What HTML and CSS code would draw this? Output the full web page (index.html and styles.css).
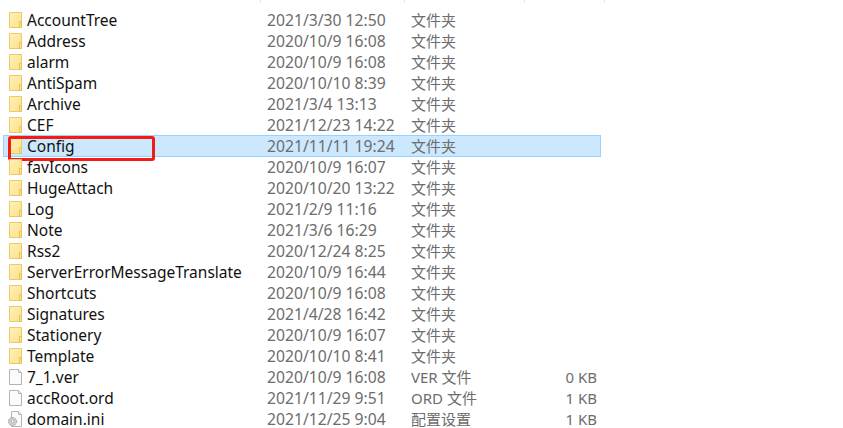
FILE: index.html
```html
<!DOCTYPE html>
<html lang="zh">
<head>
<meta charset="utf-8">
<title>Files</title>
<link rel="stylesheet" href="styles.css">
</head>
<body>
<svg class="defs" width="0" height="0" aria-hidden="true">
  <defs>
    <linearGradient id="fg" x1="0" y1="0" x2="1" y2="1">
      <stop offset="0" stop-color="#fff1b8"/>
      <stop offset="1" stop-color="#fde08a"/>
    </linearGradient>
  </defs>
  <symbol id="folder" viewBox="0 0 16 16">
    <path d="M1.5 .5H13.5V15.5H1.5Z" fill="url(#fg)" stroke="#eccb66"/>
    <path d="M11.5 9.5H13.5V15.5H11.5Z" fill="#fbe39a" stroke="#e8c259"/>
  </symbol>
  <symbol id="file" viewBox="0 0 16 16">
    <path d="M1.5 .5H10.5L13.5 3.5V15.5H1.5Z" fill="#fbfbfb" stroke="#b4b4b4"/>
    <path d="M10.5 .5V3.5H13.5" fill="#ececec" stroke="#b4b4b4"/>
  </symbol>
  <symbol id="ini" viewBox="0 0 16 16">
    <path d="M3.5 .5H10.5L13.5 3.5V15.5H3.5Z" fill="#fbfbfb" stroke="#b4b4b4"/>
    <path d="M10.5 .5V3.5H13.5" fill="#ececec" stroke="#b4b4b4"/>
    <circle cx="4.5" cy="10.5" r="4" fill="#d2d2d2" stroke="#949494" stroke-dasharray="1.6 1"/>
    <circle cx="4.5" cy="10.5" r="1.5" fill="#f4f4f4" stroke="#949494" stroke-width=".6"/>
  </symbol>
</svg>
<div class="headers"><i></i><i></i><i></i><i></i></div>
<div class="list">
  <div class="row"><svg class="icon"><use href="#folder"/></svg><span class="name">AccountTree</span><span class="date">2021/3/30 12:50</span><span class="type">文件夹</span></div>
  <div class="row"><svg class="icon"><use href="#folder"/></svg><span class="name">Address</span><span class="date">2020/10/9 16:08</span><span class="type">文件夹</span></div>
  <div class="row"><svg class="icon"><use href="#folder"/></svg><span class="name">alarm</span><span class="date">2020/10/9 16:08</span><span class="type">文件夹</span></div>
  <div class="row"><svg class="icon"><use href="#folder"/></svg><span class="name">AntiSpam</span><span class="date">2020/10/10 8:39</span><span class="type">文件夹</span></div>
  <div class="row"><svg class="icon"><use href="#folder"/></svg><span class="name">Archive</span><span class="date">2021/3/4 13:13</span><span class="type">文件夹</span></div>
  <div class="row"><svg class="icon"><use href="#folder"/></svg><span class="name">CEF</span><span class="date">2021/12/23 14:22</span><span class="type">文件夹</span></div>
  <div class="row selected"><svg class="icon"><use href="#folder"/></svg><span class="name">Config</span><span class="date">2021/11/11 19:24</span><span class="type">文件夹</span><div class="mark"></div></div>
  <div class="row"><svg class="icon"><use href="#folder"/></svg><span class="name">favIcons</span><span class="date">2020/10/9 16:07</span><span class="type">文件夹</span></div>
  <div class="row"><svg class="icon"><use href="#folder"/></svg><span class="name">HugeAttach</span><span class="date">2020/10/20 13:22</span><span class="type">文件夹</span></div>
  <div class="row"><svg class="icon"><use href="#folder"/></svg><span class="name">Log</span><span class="date">2021/2/9 11:16</span><span class="type">文件夹</span></div>
  <div class="row"><svg class="icon"><use href="#folder"/></svg><span class="name">Note</span><span class="date">2021/3/6 16:29</span><span class="type">文件夹</span></div>
  <div class="row"><svg class="icon"><use href="#folder"/></svg><span class="name">Rss2</span><span class="date">2020/12/24 8:25</span><span class="type">文件夹</span></div>
  <div class="row"><svg class="icon"><use href="#folder"/></svg><span class="name">ServerErrorMessageTranslate</span><span class="date">2020/10/9 16:44</span><span class="type">文件夹</span></div>
  <div class="row"><svg class="icon"><use href="#folder"/></svg><span class="name">Shortcuts</span><span class="date">2020/10/9 16:08</span><span class="type">文件夹</span></div>
  <div class="row"><svg class="icon"><use href="#folder"/></svg><span class="name">Signatures</span><span class="date">2021/4/28 16:42</span><span class="type">文件夹</span></div>
  <div class="row"><svg class="icon"><use href="#folder"/></svg><span class="name">Stationery</span><span class="date">2020/10/9 16:07</span><span class="type">文件夹</span></div>
  <div class="row"><svg class="icon"><use href="#folder"/></svg><span class="name">Template</span><span class="date">2020/10/10 8:41</span><span class="type">文件夹</span></div>
  <div class="row"><svg class="icon"><use href="#file"/></svg><span class="name">7_1.ver</span><span class="date">2020/10/9 16:08</span><span class="type">VER 文件</span><span class="size">0 KB</span></div>
  <div class="row"><svg class="icon"><use href="#file"/></svg><span class="name">accRoot.ord</span><span class="date">2021/11/29 9:51</span><span class="type">ORD 文件</span><span class="size">1 KB</span></div>
  <div class="row"><svg class="icon"><use href="#ini"/></svg><span class="name">domain.ini</span><span class="date">2021/12/25 9:04</span><span class="type">配置设置</span><span class="size">1 KB</span></div>
</div>
</body>
</html>
```
FILE: styles.css
```css
html, body { margin: 0; padding: 0; background: #fff; }
body {
  width: 843px; height: 428px; overflow: hidden; position: relative;
  font-family: "Noto Sans", "Noto Sans CJK SC", sans-serif;
  font-size: 15.5px;
  line-height: 20px;
}
.defs { position: absolute; }
.headers { height: 3px; display: flex; padding-left: 260px; }
.headers i { display: block; width: 1px; height: 3px; background: #e5e5e5; }
.headers i:nth-child(1) { margin-right: 143px; }
.headers i:nth-child(2) { margin-right: 119px; }
.headers i:nth-child(3) { margin-right: 79px; }
.list { padding-top: 6px; }
.row {
  display: flex; align-items: center; height: 21px; width: 598px; margin-left: 3px;
  position: relative; white-space: nowrap;
}
.row.selected {
  background: #cce8ff;
  box-shadow: inset 0 1px 0 #99d1ff, inset 1px 0 0 #99d1ff, inset -1px 0 0 #99d1ff, 0 1px 0 #99d1ff;
}
.icon { width: 16px; height: 16px; margin-left: 5px; flex: none; }
.name { margin-left: 3px; width: 240px; color: #111; flex: none; }
.date { width: 144px; color: #6d6d6d; flex: none; font-size: 15.7px; }
.type { width: 120px; color: #6d6d6d; flex: none; font-size: 15px; }
.size { width: 66px; text-align: right; color: #6d6d6d; flex: none; font-size: 15px; }
.mark {
  position: absolute; left: 5px; top: 1px; width: 147px; height: 25px;
  border: 3px solid #f21c14; border-radius: 3px; box-sizing: border-box;
}
```
